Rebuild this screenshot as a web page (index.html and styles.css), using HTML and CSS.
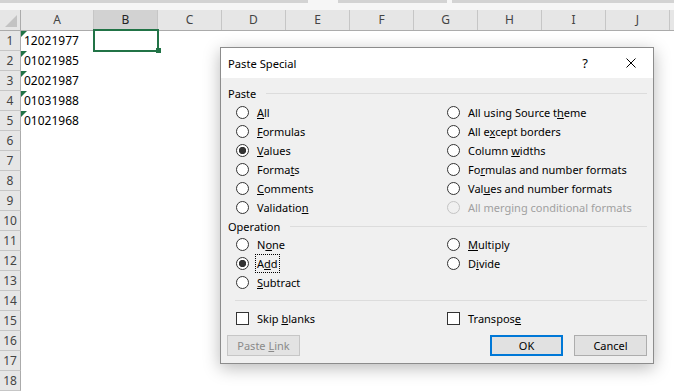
FILE: index.html
```html
<!DOCTYPE html>
<html>
<head>
<meta charset="utf-8">
<title>Paste Special</title>
<link rel="stylesheet" href="styles.css">
</head>
<body>
<div class="app">
  <div class="topstrip">
    <span class="seg w1"></span><span class="seg gap w2"></span><span class="seg w3"></span><span class="seg gap w4"></span><span class="seg w5"></span>
  </div>
  <div class="colheads">
    <div class="corner"></div>
    <div class="colh">A</div>
    <div class="colh sel">B</div>
    <div class="colh">C</div>
    <div class="colh">D</div>
    <div class="colh">E</div>
    <div class="colh">F</div>
    <div class="colh">G</div>
    <div class="colh">H</div>
    <div class="colh">I</div>
    <div class="colh">J</div>
    <div class="colh last"></div>
  </div>
  <div class="rows">
    <div class="row"><div class="rh">1</div><div class="c err">12021977</div><div class="c active"></div><div class="c"></div></div>
    <div class="row"><div class="rh">2</div><div class="c err">01021985</div><div class="c"></div><div class="c"></div></div>
    <div class="row"><div class="rh">3</div><div class="c err">02021987</div><div class="c"></div><div class="c"></div></div>
    <div class="row"><div class="rh">4</div><div class="c err">01031988</div><div class="c"></div><div class="c"></div></div>
    <div class="row"><div class="rh">5</div><div class="c err">01021968</div><div class="c"></div><div class="c"></div></div>
    <div class="row"><div class="rh">6</div><div class="c"></div><div class="c"></div><div class="c"></div></div>
    <div class="row"><div class="rh">7</div><div class="c"></div><div class="c"></div><div class="c"></div></div>
    <div class="row"><div class="rh">8</div><div class="c"></div><div class="c"></div><div class="c"></div></div>
    <div class="row"><div class="rh">9</div><div class="c"></div><div class="c"></div><div class="c"></div></div>
    <div class="row"><div class="rh">10</div><div class="c"></div><div class="c"></div><div class="c"></div></div>
    <div class="row"><div class="rh">11</div><div class="c"></div><div class="c"></div><div class="c"></div></div>
    <div class="row"><div class="rh">12</div><div class="c"></div><div class="c"></div><div class="c"></div></div>
    <div class="row"><div class="rh">13</div><div class="c"></div><div class="c"></div><div class="c"></div></div>
    <div class="row"><div class="rh">14</div><div class="c"></div><div class="c"></div><div class="c"></div></div>
    <div class="row"><div class="rh">15</div><div class="c"></div><div class="c"></div><div class="c"></div></div>
    <div class="row"><div class="rh">16</div><div class="c"></div><div class="c"></div><div class="c"></div></div>
    <div class="row"><div class="rh">17</div><div class="c"></div><div class="c"></div><div class="c"></div></div>
    <div class="row"><div class="rh">18</div><div class="c"></div><div class="c"></div><div class="c"></div></div>
  </div>

  <div class="dialog">
    <div class="titlebar">
      <span class="title">Paste Special</span>
      <span class="help">?</span>
      <span class="close"><svg width="10" height="10" viewBox="0 0 10 10"><path d="M0.5 0.5L9.5 9.5M9.5 0.5L0.5 9.5" stroke="#000" stroke-width="1" fill="none"/></svg></span>
    </div>
    <div class="dbody">
      <div class="group"><span>Paste</span><span class="rule"></span></div>
      <div class="opts">
        <div class="opt"><span class="radio"></span><span><u>A</u>ll</span></div>
        <div class="opt"><span class="radio"></span><span>All using Source t<u>h</u>eme</span></div>
        <div class="opt"><span class="radio"></span><span><u>F</u>ormulas</span></div>
        <div class="opt"><span class="radio"></span><span>All e<u>x</u>cept borders</span></div>
        <div class="opt"><span class="radio on"></span><span><u>V</u>alues</span></div>
        <div class="opt"><span class="radio"></span><span>Column <u>w</u>idths</span></div>
        <div class="opt"><span class="radio"></span><span>Forma<u>t</u>s</span></div>
        <div class="opt"><span class="radio"></span><span>Fo<u>r</u>mulas and number formats</span></div>
        <div class="opt"><span class="radio"></span><span><u>C</u>omments</span></div>
        <div class="opt"><span class="radio"></span><span>Val<u>u</u>es and number formats</span></div>
        <div class="opt"><span class="radio"></span><span>Validatio<u>n</u></span></div>
        <div class="opt disabled"><span class="radio"></span><span>All mer<u>g</u>ing conditional formats</span></div>
      </div>
      <div class="group op"><span>Operation</span><span class="rule"></span></div>
      <div class="opts">
        <div class="opt"><span class="radio"></span><span>N<u>o</u>ne</span></div>
        <div class="opt"><span class="radio"></span><span><u>M</u>ultiply</span></div>
        <div class="opt"><span class="radio on"></span><span class="focus">A<u>d</u>d</span></div>
        <div class="opt"><span class="radio"></span><span>D<u>i</u>vide</span></div>
        <div class="opt"><span class="radio"></span><span><u>S</u>ubtract</span></div>
        <div class="opt empty"></div>
      </div>
      <div class="sep"></div>
      <div class="opts checks">
        <div class="opt"><span class="check"></span><span>Skip <u>b</u>lanks</span></div>
        <div class="opt"><span class="check"></span><span>Transpos<u>e</u></span></div>
      </div>
      <div class="buttons">
        <button class="btn dis">Paste <u>L</u>ink</button>
        <span class="spacer"></span>
        <button class="btn default">OK</button>
        <button class="btn">Cancel</button>
      </div>
    </div>
  </div>
</div>
</body>
</html>
```

FILE: styles.css
```css
* { box-sizing: border-box; margin: 0; padding: 0; }
html, body { width: 674px; height: 391px; overflow: hidden; background: #fff; }
body { font-family: "Noto Sans", "Open Sans", sans-serif; color: #000; }

.app { position: relative; width: 674px; height: 391px; overflow: hidden; }

/* top strip */
.topstrip { height: 10px; background: #f6f6f6; display: flex; align-items: flex-start; }
.seg { height: 3px; background: #d3d3d3; }
.seg.gap { background: #f6f6f6; }
.w1 { width: 308px; }
.w2 { width: 30px; }
.w3 { width: 109px; }
.w4 { width: 5px; }
.w5 { flex: 1; }

/* column headers */
.colheads {
  display: grid;
  grid-template-columns: 21px 73px repeat(9, 64px) 1fr;
  height: 21px;
  background: #e6e6e6;
  border-bottom: 1px solid #ababab;
}
.corner { position: relative; border-right: 1px solid #ababab; }
.corner::after {
  content: "";
  position: absolute;
  right: 3px;
  bottom: 3px;
  border-style: solid;
  border-width: 0 0 12px 12px;
  border-color: transparent transparent #c3c3c3 transparent;
}
.colh {
  border-right: 1px solid #c6c6c6;
  text-align: center;
  font-size: 12px;
  line-height: 20px;
  color: #444;
}
.colh.sel { background: #d2d2d2; color: #222; }
.colh.last { border-right: none; }

/* rows */
.row {
  display: grid;
  grid-template-columns: 21px 73px 64px 1fr;
  height: 20px;
}
.rh {
  background: #e6e6e6;
  border-right: 1px solid #ababab;
  border-bottom: 1px solid #c6c6c6;
  text-align: center;
  font-size: 12px;
  line-height: 19px;
  color: #444;
}
.c {
  position: relative;
  font-size: 12px;
  line-height: 20px;
  padding-left: 3px;
  color: #000;
}
.c.err::before {
  content: "";
  position: absolute;
  left: 0;
  top: 0;
  border-style: solid;
  border-width: 6px 6px 0 0;
  border-color: #217346 transparent transparent transparent;
}
.c.active::after {
  content: "";
  position: absolute;
  left: -1px;
  top: -2px;
  right: -1px;
  bottom: -1px;
  border: 2px solid #217346;
}
.c.active::before {
  content: "";
  position: absolute;
  right: -3px;
  bottom: -2px;
  width: 5px;
  height: 5px;
  background: #217346;
  z-index: 1;
}

/* dialog */
.dialog {
  position: absolute;
  left: 220px;
  top: 47px;
  width: 434px;
  height: 317px;
  border: 1px solid #8c8c8c;
  background: #f0f0f0;
  box-shadow: 0 4px 16px rgba(0, 0, 0, 0.28);
  font-size: 11px;
  display: flex;
  flex-direction: column;
}
.titlebar {
  height: 30px;
  background: #fff;
  display: flex;
  align-items: center;
  padding: 0 7px;
}
.title { font-size: 11.2px; }
.help { margin-left: auto; width: 20px; text-align: center; font-size: 13px; }
.close { width: 30px; margin-left: 21px; display: flex; justify-content: center; align-items: center; }

.dbody { padding: 6px 6px 7px 7px; }

.group { display: flex; align-items: center; height: 19px; }
.group.op { height: 18px; }
.rule { flex: 1; height: 1px; background: #dcdcdc; margin-left: 10px; }

.opts {
  display: grid;
  grid-template-columns: 211px 1fr;
  grid-auto-rows: 19px;
  margin-left: 8px;
}
.opt { display: flex; align-items: center; white-space: nowrap; }
.radio {
  width: 13px;
  height: 13px;
  border: 1px solid #333;
  border-radius: 50%;
  background: #fff;
  margin-right: 8px;
  flex: none;
}
.radio.on { background: radial-gradient(circle, #333 0 3.4px, #fff 3.9px); }
.opt.disabled { color: #a0a0a0; }
.opt.disabled .radio { border-color: #c4c4c4; background: transparent; }
.focus { outline: 1px dotted #000; outline-offset: 1px; }

.sep { height: 1px; background: #dcdcdc; margin: 8px 0 0 7px; }
.checks { margin-top: 8px; }
.check {
  width: 13px;
  height: 13px;
  border: 1px solid #333;
  background: #fff;
  margin-right: 8px;
  flex: none;
}

.buttons { display: flex; margin-top: 7px; margin-left: -1px; gap: 11px; }
.spacer { flex: 1; }
.btn {
  width: 73px;
  height: 21px;
  font-family: inherit;
  font-size: 11px;
  color: #000;
  background: #e1e1e1;
  border: 1px solid #adadad;
}
.btn.default { border: 2px solid #0078d7; }
.btn.dis { background: #e3e3e3; border-color: #c6c6c6; color: #8a8a8a; }
```
